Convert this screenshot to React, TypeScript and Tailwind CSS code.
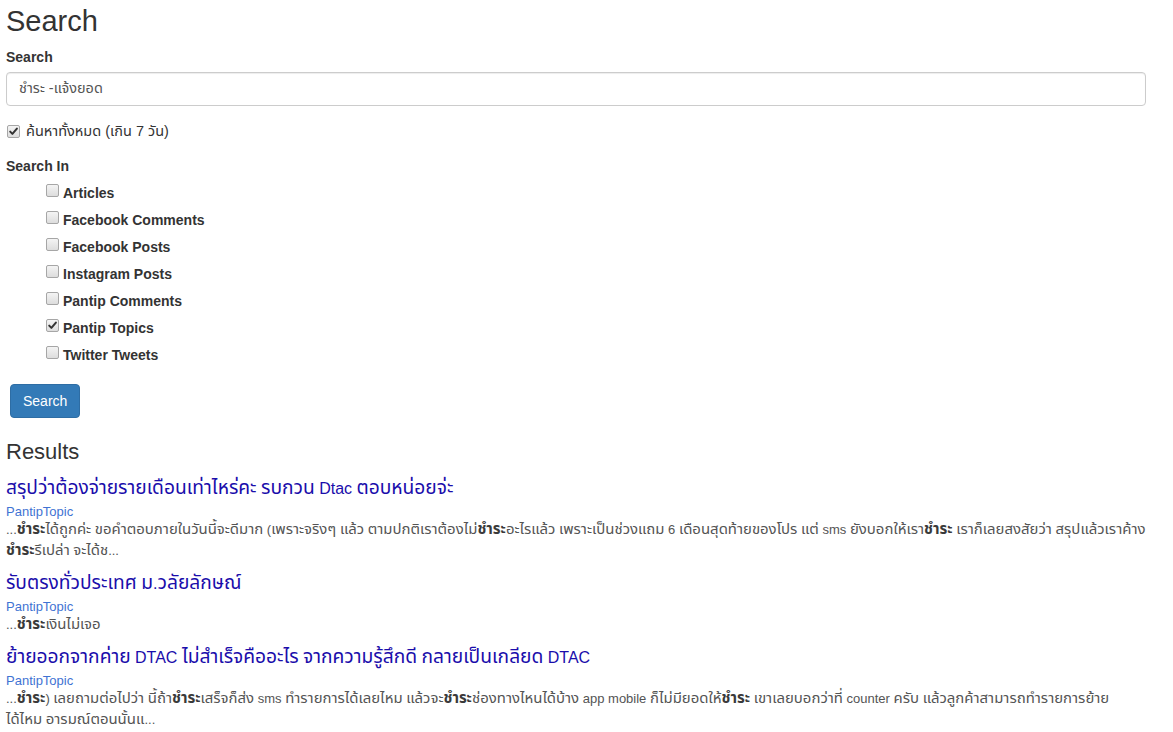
import React from "react";

function Box({ checked, className = "" }: { checked?: boolean; className?: string }) {
  return (
    <span
      className={
        "inline-flex h-[13px] w-[13px] shrink-0 items-center justify-center rounded-[2px] border border-[#a6a6a6] bg-linear-to-b from-[#f4f4f4] to-[#dddddd] " +
        className
      }
    >
      {checked && (
        <svg width="11" height="11" viewBox="0 0 11 11" className="block">
          <path d="M2.2 5.6 L4.4 7.9 L8.9 2.6" fill="none" stroke="#333" strokeWidth="2" strokeLinecap="round" strokeLinejoin="round" />
        </svg>
      )}
    </span>
  );
}

const sources = [
  { name: "Articles", checked: false },
  { name: "Facebook Comments", checked: false },
  { name: "Facebook Posts", checked: false },
  { name: "Instagram Posts", checked: false },
  { name: "Pantip Comments", checked: false },
  { name: "Pantip Topics", checked: true },
  { name: "Twitter Tweets", checked: false },
];

// Thai runs are drawn a little larger, as the Thai fallback face in the reference is wider.
function Th({ text, big }: { text: string; big?: boolean }) {
  const parts = text.split(/([\u0E00-\u0E7F]+)/);
  return (
    <>
      {parts.map((p, i) =>
        /[\u0E00-\u0E7F]/.test(p) ? (
          <span key={i} className={big ? "text-[1.2em] leading-none" : "text-[1.15em] leading-none"}>
            {p}
          </span>
        ) : (
          <React.Fragment key={i}>{p}</React.Fragment>
        )
      )}
    </>
  );
}

type Seg = string | { b: string } | { br: true };

function Snippet({ segs }: { segs: Seg[] }) {
  return (
    <>
      {segs.map((s, i) =>
        typeof s === "string" ? (
          <Th key={i} text={s} />
        ) : "br" in s ? (
          <br key={i} />
        ) : (
          <b key={i} className="font-bold text-[#3a3a3a]">
            <Th text={s.b} />
          </b>
        )
      )}
    </>
  );
}

function Result({ title, snippet }: { title: string; snippet: Seg[] }) {
  return (
    <div className="mt-[12px] first:mt-0">
      <div className="text-[16px] leading-[22px] text-[#1a0dab]">
        <Th text={title} big />
      </div>
      <div className="mt-[2px] text-[13px] leading-[20px] text-[#3f73d3]">PantipTopic</div>
      <div className="-mt-[3px] text-[13px] leading-[21px] text-[#545454]">
        <Snippet segs={snippet} />
      </div>
    </div>
  );
}

export default function App() {
  return (
    <div className="min-h-screen bg-white pl-[6px] pr-[27px] font-['Liberation_Sans','Noto_Sans','Noto_Sans_Thai',Tahoma,sans-serif] text-[14px] text-[#333]">
      <h1 className="pt-[5px] text-[29px] font-normal leading-[32px]">Search</h1>
      <label className="mt-[10px] block text-[14px] font-bold leading-[20px]">Search</label>
      <div className="mt-[5px] flex h-[34px] items-center rounded-[4px] border border-[#cccccc] px-[12px] text-[14px] text-[#555] shadow-[inset_0_1px_1px_rgba(0,0,0,0.075)]">
        <span className="text-[14.5px]">ชำระ -แจ้งยอด</span>
      </div>
      <div className="mt-[15px] flex h-[20px] items-start leading-[20px]">
        <Box checked className="mt-[4px] ml-px" />
        <span className="ml-[6px] text-[14.5px]">ค้นหาทั้งหมด (เกิน 7 วัน)</span>
      </div>
      <label className="mt-[15px] block text-[14px] font-bold leading-[20px]">Search In</label>
      <ul className="mt-[7px] flex flex-col gap-[7px] pl-[40px]">
        {sources.map((s) => (
          <li key={s.name} className="flex h-[20px] items-start leading-[20px]">
            <Box checked={s.checked} className="mt-px" />
            <span className="ml-[4px] font-bold">{s.name}</span>
          </li>
        ))}
      </ul>
      <button className="mt-[19px] ml-[4px] h-[34px] rounded-[4px] border border-[#2e6da4] bg-[#337ab7] px-[12px] text-[14px] leading-[20px] text-white">
        Search
      </button>
      <h2 className="mt-[22px] text-[22px] font-normal leading-[24px]">Results</h2>
      <div className="mt-[14px] flex flex-col">
        <Result
          title="สรุปว่าต้องจ่ายรายเดือนเท่าไหร่คะ รบกวน Dtac ตอบหน่อยจ่ะ"
          snippet={[
            "...",
            { b: "ชำระ" },
            "ได้ถูกค่ะ ขอคำตอบภายในวันนี้จะดีมาก (เพราะจริงๆ แล้ว ตามปกติเราต้องไม่",
            { b: "ชำระ" },
            "อะไรแล้ว เพราะเป็นช่วงแถม 6 เดือนสุดท้ายของโปร แต่ sms ยังบอกให้เรา",
            { b: "ชำระ" },
            " เราก็เลยสงสัยว่า สรุปแล้วเราค้าง",
            { br: true },
            { b: "ชำระ" },
            "รึเปล่า จะได้ช...",
          ]}
        />
        <Result title="รับตรงทั่วประเทศ ม.วลัยลักษณ์" snippet={["...", { b: "ชำระ" }, "เงินไม่เจอ"]} />
        <Result
          title="ย้ายออกจากค่าย DTAC ไม่สำเร็จคืออะไร จากความรู้สึกดี กลายเป็นเกลียด DTAC"
          snippet={[
            "...",
            { b: "ชำระ" },
            ") เลยถามต่อไปว่า นี้ถ้า",
            { b: "ชำระ" },
            "เสร็จก็ส่ง sms ทำรายการได้เลยไหม แล้วจะ",
            { b: "ชำระ" },
            "ช่องทางไหนได้บ้าง app mobile ก็ไม่มียอดให้",
            { b: "ชำระ" },
            " เขาเลยบอกว่าที่ counter ครับ แล้วลูกค้าสามารถทำรายการย้าย",
            { br: true },
            "ได้ไหม อารมณ์ตอนนั้นแ...",
          ]}
        />
      </div>
    </div>
  );
}
